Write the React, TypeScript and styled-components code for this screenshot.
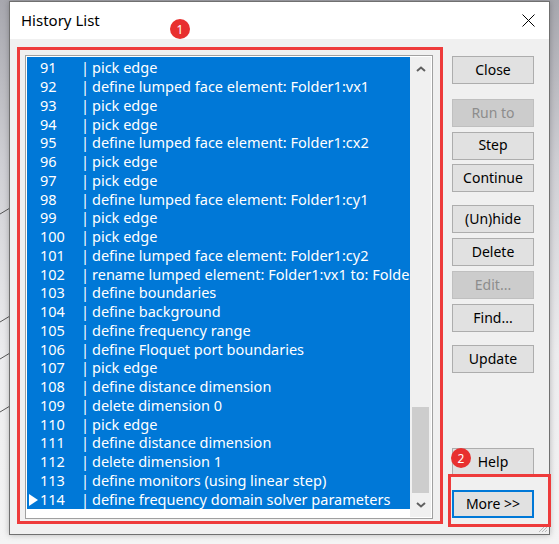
import React from "react";
import styled, { createGlobalStyle } from "styled-components";

const GlobalStyle = createGlobalStyle`
  html, body {
    margin: 0;
    padding: 0;
    background: #f4f4f4;
  }
  * {
    box-sizing: border-box;
  }
`;

const Screen = styled.div`
  position: relative;
  width: 559px;
  height: 544px;
  overflow: hidden;
  padding: 1px 9px 0 9px;
  background: linear-gradient(180deg, #a7a7ae 0%, #cfcfd4 30%, #ececee 65%, #f4f4f4 100%);
  font-family: "Noto Sans", "Open Sans", sans-serif;
`;

const BackLines = styled.svg`
  position: absolute;
  left: 0;
  top: 0;
`;

const Dialog = styled.div`
  position: relative;
  width: 541px;
  height: 534px;
  display: flex;
  flex-direction: column;
  background: #f0f0f0;
  border: 1px solid #707070;
  box-shadow: 0 0 6px rgba(0, 0, 0, 0.25);
`;

const TitleBar = styled.div`
  height: 37px;
  display: flex;
  align-items: center;
  justify-content: space-between;
  padding: 0 14px 0 11px;
  background: #ffffff;
`;

const Title = styled.div`
  font-size: 15px;
  color: #000;
  padding-bottom: 2px;
`;

const Body = styled.div`
  flex: 1;
  display: flex;
  gap: 9px;
  padding: 8px 0 10px 7px;
`;

const Highlight = styled.div`
  width: 426px;
  height: 477px;
  border: 3px solid #ee3b3b;
  padding: 5px 7px 2px 5px;
`;

const ListBox = styled.div`
  height: 100%;
  display: flex;
  border: 1px solid #a0a0a0;
  padding: 1px;
  background: #ffffff;
`;

const Rows = styled.div`
  flex: 1;
  min-width: 0;
  background: #ffffff;
  overflow: hidden;
`;

const Selection = styled.div`
  background: #0078d7;
  padding-top: 2px;
`;

const Row = styled.div`
  height: 18.75px;
  display: grid;
  grid-template-columns: 13px 41px 11px 1fr;
  align-items: center;
  padding-bottom: 2px;
  color: #ffffff;
  font-size: 14.5px;
  white-space: nowrap;
  line-height: 16px;
`;

const Marker = styled.span`
  display: flex;
  align-items: center;
  padding-left: 2px;
  padding-top: 2px;
`;

const ScrollBar = styled.div`
  width: 21px;
  display: flex;
  flex-direction: column;
  background: #f0f0f0;
`;

const ArrowBox = styled.div`
  height: 24px;
  display: flex;
  align-items: center;
  justify-content: center;
`;

const Track = styled.div`
  flex: 1;
  display: flex;
  flex-direction: column;
  padding: 0 2px 0 2px;
`;

const Thumb = styled.div`
  margin-top: auto;
  height: 86px;
  background: #cdcdcd;
`;

const Buttons = styled.div`
  width: 82px;
  display: flex;
  flex-direction: column;
  padding: 9px 0 6px 0;
`;

const Group = styled.div<{ $gap: number; $top: number }>`
  display: flex;
  flex-direction: column;
  gap: ${(p) => p.$gap}px;
  margin-top: ${(p) => p.$top}px;
`;

const Bottom = styled.div`
  margin-top: auto;
  display: flex;
  flex-direction: column;
  gap: 14px;
`;

const Button = styled.button<{ $default?: boolean }>`
  height: 28px;
  width: 82px;
  padding: 0 0 2px 0;
  font-family: "Noto Sans", "Open Sans", sans-serif;
  font-size: 14px;
  color: #000;
  background: #e1e1e1;
  border: ${(p) => (p.$default ? "2px solid #0078d7" : "1px solid #adadad")};
  &:disabled {
    color: #8d8d8d;
    background: #cccccc;
    border-color: #bfbfbf;
  }
`;

const Annotation = styled.div`
  position: absolute;
  left: 448px;
  top: 474px;
  width: 103px;
  height: 53px;
  border: 3px solid #ee3b3b;
`;

const Badge = styled.div<{ $x: number; $y: number }>`
  position: absolute;
  left: ${(p) => p.$x}px;
  top: ${(p) => p.$y}px;
  width: 20px;
  height: 20px;
  border-radius: 50%;
  background: #e8302f;
  color: #fff;
  font-size: 12px;
  display: flex;
  align-items: center;
  justify-content: center;
`;

const Grip = styled.svg`
  position: absolute;
  right: 1px;
  bottom: 1px;
`;

const history: [number, string][] = [
  [91, "pick edge"],
  [92, "define lumped face element: Folder1:vx1"],
  [93, "pick edge"],
  [94, "pick edge"],
  [95, "define lumped face element: Folder1:cx2"],
  [96, "pick edge"],
  [97, "pick edge"],
  [98, "define lumped face element: Folder1:cy1"],
  [99, "pick edge"],
  [100, "pick edge"],
  [101, "define lumped face element: Folder1:cy2"],
  [102, "rename lumped element: Folder1:vx1 to: Folde"],
  [103, "define boundaries"],
  [104, "define background"],
  [105, "define frequency range"],
  [106, "define Floquet port boundaries"],
  [107, "pick edge"],
  [108, "define distance dimension"],
  [109, "delete dimension 0"],
  [110, "pick edge"],
  [111, "define distance dimension"],
  [112, "delete dimension 1"],
  [113, "define monitors (using linear step)"],
  [114, "define frequency domain solver parameters"],
];

const Chevron = ({ up }: { up?: boolean }) => (
  <svg width="10" height="6" viewBox="0 0 10 6">
    <polyline
      points={up ? "1,5 5,1.5 9,5" : "1,1 5,4.5 9,1"}
      fill="none"
      stroke="#606060"
      strokeWidth="2"
    />
  </svg>
);

const App: React.FC = () => {
  return (
    <>
      <GlobalStyle />
      <Screen>
        <BackLines width="10" height="544">
          <line x1="0" y1="214" x2="10" y2="208" stroke="#333" strokeWidth="0.8" />
          <line x1="0" y1="322" x2="10" y2="316" stroke="#333" strokeWidth="0.8" />
          <line x1="0" y1="359" x2="10" y2="353" stroke="#333" strokeWidth="0.8" />
          <line x1="0" y1="412" x2="10" y2="406" stroke="#333" strokeWidth="0.8" />
        </BackLines>
        <Dialog>
          <TitleBar>
            <Title>History List</Title>
            <svg width="13" height="13" viewBox="0 0 13 13">
              <path d="M0.5 0.5 L12.5 12.5 M12.5 0.5 L0.5 12.5" stroke="#000" strokeWidth="1" />
            </svg>
          </TitleBar>
          <Body>
            <Highlight>
              <ListBox>
                <Rows>
                  <Selection>
                    {history.map(([n, text], i) => (
                      <Row key={n}>
                        <Marker>
                          {i === history.length - 1 && (
                            <svg width="9" height="12" viewBox="0 0 9 12">
                              <polygon points="0,0 9,6 0,12" fill="#ffffff" />
                            </svg>
                          )}
                        </Marker>
                        <span>{n}</span>
                        <span>|</span>
                        <span>{text}</span>
                      </Row>
                    ))}
                  </Selection>
                </Rows>
                <ScrollBar>
                  <ArrowBox>
                    <Chevron up />
                  </ArrowBox>
                  <Track>
                    <Thumb />
                  </Track>
                  <ArrowBox>
                    <Chevron />
                  </ArrowBox>
                </ScrollBar>
              </ListBox>
            </Highlight>
            <Buttons>
              <Button>Close</Button>
              <Group $gap={4.5} $top={15}>
                <Button disabled>Run to</Button>
                <Button>Step</Button>
                <Button>Continue</Button>
              </Group>
              <Group $gap={5} $top={13}>
                <Button>(Un)hide</Button>
                <Button>Delete</Button>
                <Button disabled>Edit...</Button>
                <Button>Find...</Button>
              </Group>
              <Group $gap={0} $top={13}>
                <Button>Update</Button>
              </Group>
              <Bottom>
                <Button>Help</Button>
                <Button $default>More &gt;&gt;</Button>
              </Bottom>
            </Buttons>
          </Body>
          <Grip width="12" height="12" viewBox="0 0 12 12">
            <path d="M11 3 L3 11 M11 6 L6 11 M11 9 L9 11" stroke="#b8b8b8" strokeWidth="1" />
          </Grip>
        </Dialog>
        <Annotation />
        <Badge $x={170} $y={19}>1</Badge>
        <Badge $x={451} $y={448}>2</Badge>
      </Screen>
    </>
  );
};

export default App;
